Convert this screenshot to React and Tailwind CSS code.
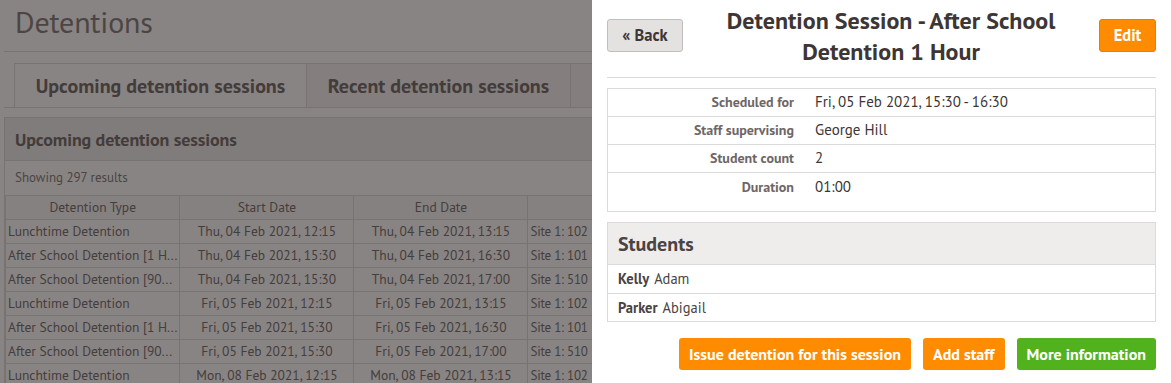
import React from "react";

const rows = [
  ["Lunchtime Detention", "Thu, 04 Feb 2021, 12:15", "Thu, 04 Feb 2021, 13:15", "Site 1: 102"],
  ["After School Detention [1 H...", "Thu, 04 Feb 2021, 15:30", "Thu, 04 Feb 2021, 16:30", "Site 1: 101"],
  ["After School Detention [90...", "Thu, 04 Feb 2021, 15:30", "Thu, 04 Feb 2021, 17:00", "Site 1: 510"],
  ["Lunchtime Detention", "Fri, 05 Feb 2021, 12:15", "Fri, 05 Feb 2021, 13:15", "Site 1: 102"],
  ["After School Detention [1 H...", "Fri, 05 Feb 2021, 15:30", "Fri, 05 Feb 2021, 16:30", "Site 1: 101"],
  ["After School Detention [90...", "Fri, 05 Feb 2021, 15:30", "Fri, 05 Feb 2021, 17:00", "Site 1: 510"],
  ["Lunchtime Detention", "Mon, 08 Feb 2021, 12:15", "Mon, 08 Feb 2021, 13:15", "Site 1: 102"],
];

const info = [
  ["Scheduled for", "Fri, 05 Feb 2021, 15:30 - 16:30"],
  ["Staff supervising", "George Hill"],
  ["Student count", "2"],
  ["Duration", "01:00"],
];

function BackgroundPage() {
  return (
    <div className="w-[1171px] h-[383px] bg-white px-[4px] text-[#787271]">
      <h1 className="h-[51px] pl-[11px] pt-[4px] text-[30px] leading-[36px] font-normal text-[#878180] tracking-[-0.2px]">
        Detentions
      </h1>
      <div className="border-t border-[#dedcdc]" />
      <div className="mt-[11px] flex h-[45px] border-b border-[#dedcdc] pl-[10px]">
        <div className="flex w-[293px] items-center justify-center border border-b-0 border-[#dedcdc] bg-white text-[20px] font-bold text-[#746e6d]">
          Upcoming detention sessions
        </div>
        <div className="flex w-[264px] items-center justify-center border-r border-t border-[#dedcdc] bg-[#f6f5f5] text-[20px] font-bold text-[#746e6d]">
          Recent detention sessions
        </div>
        <div className="w-[300px] border-t border-[#dedcdc] bg-[#f6f5f5]" />
      </div>
      <div className="mt-[9px] border border-[#dedcdc]">
        <div className="flex h-[43px] items-center border-b border-[#dedcdc] bg-[#efeeee] pl-[10px] text-[18px] font-bold text-[#746e6d] tracking-[-0.1px]">
          Upcoming detention sessions
        </div>
        <div className="flex h-[35px] items-center border-b border-[#dedcdc] pl-[10px] text-[13px] text-[#847e7d]">
          Showing 297 results
        </div>
        <table className="table-fixed border-collapse text-[13.5px] leading-[23px]">
          <thead>
            <tr>
              {["Detention Type", "Start Date", "End Date", "", "", ""].map((h, i) => (
                <th key={i} className="w-[174px] border border-t-0 border-[#dedcdc] bg-[#f9f8f8] px-[2px] text-center font-normal">
                  {h}
                </th>
              ))}
            </tr>
          </thead>
          <tbody>
            {rows.map((r, i) => (
              <tr key={i}>
                <td className="border border-[#dedcdc] px-[2px] whitespace-nowrap">{r[0]}</td>
                <td className="border border-[#dedcdc] px-[2px] text-center whitespace-nowrap">{r[1]}</td>
                <td className="border border-[#dedcdc] px-[2px] text-center whitespace-nowrap">{r[2]}</td>
                <td className="border border-[#dedcdc] px-[2px] whitespace-nowrap text-[13px] tracking-[-0.2px]">{r[3]}</td>
                <td className="border border-[#dedcdc] px-[2px]"></td>
                <td className="border border-[#dedcdc] px-[2px]"></td>
              </tr>
            ))}
          </tbody>
        </table>
      </div>
    </div>
  );
}

function Panel() {
  return (
    <aside className="absolute right-0 top-0 h-[383px] w-[579px] bg-white px-[15px] text-[#3d3635]">
      <div className="flex h-[67px] items-center pt-[4px]">
        <button className="h-[33px] w-[76px] shrink-0 rounded-[3px] border border-[#c2bebd] bg-[#e4e2e1] text-[16.5px] font-bold text-[#3d3635]">
          « Back
        </button>
        <h2 className="flex-1 text-center text-[24px] font-bold leading-[31px] text-[#3d3635]">
          Detention Session - After School
          <br />
          Detention 1 Hour
        </h2>
        <button className="h-[33px] w-[57px] shrink-0 rounded-[3px] border border-[#e97f00] bg-[#ff8c00] text-[16.5px] font-bold text-white">
          Edit
        </button>
      </div>
      <div className="mt-[10px] border-t border-[#dddada]" />
      <div className="mt-[10px] border border-[#dddada] pb-[10px]">
        {info.map(([k, v], i) => (
          <div key={k} className={`flex h-[28px] items-center ${i < info.length - 1 ? "border-b border-[#dddada]" : ""}`}>
            <div className="w-[192px] pr-[6px] text-right text-[14px] font-bold text-[#6e6665]">{k}</div>
            <div className="pl-[15px] text-[15px] text-[#3d3635]">{v}</div>
          </div>
        ))}
      </div>
      <div className="mt-[10px] border border-[#dddada]">
        <div className="flex h-[42px] items-center border-b border-[#dddada] bg-[#efedec] pl-[10px] text-[20px] font-bold text-[#4a4342]">
          Students
        </div>
        <div className="flex h-[29px] items-center border-b border-[#dddada] pl-[10px] text-[14.5px]">
          <span className="font-bold text-[#4a4342]">Kelly</span>
          <span className="ml-[5px] text-[#4a4342]">Adam</span>
        </div>
        <div className="flex h-[27px] items-center pl-[10px] text-[14.5px]">
          <span className="font-bold text-[#4a4342]">Parker</span>
          <span className="ml-[5px] text-[#4a4342]">Abigail</span>
        </div>
      </div>
      <div className="mt-[16px] flex justify-end gap-[12px]">
        <button className="h-[32px] whitespace-nowrap rounded-[3px] bg-[#ff8c00] px-[10px] text-[16px] font-bold text-white">
          Issue detention for this session
        </button>
        <button className="h-[32px] whitespace-nowrap rounded-[3px] bg-[#ff8c00] px-[10px] text-[16px] font-bold text-white">
          Add staff
        </button>
        <button className="h-[32px] whitespace-nowrap rounded-[3px] bg-[#52b21e] px-[10px] text-[16px] font-bold text-white">
          More information
        </button>
      </div>
    </aside>
  );
}

export default function App() {
  return (
    <div className="relative h-[383px] w-[1171px] overflow-hidden font-['PT_Sans',Lato,'Liberation_Sans',sans-serif]">
      <BackgroundPage />
      <div className="absolute inset-0 bg-[#120a08]/50" />
      <Panel />
    </div>
  );
}
